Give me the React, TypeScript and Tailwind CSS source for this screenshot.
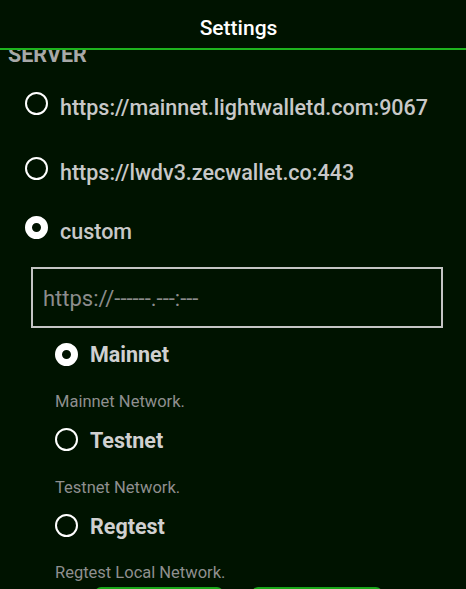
import { useState } from "react";

const Radio = ({ checked }: { checked: boolean }) =>
  checked ? (
    <span className="block w-[23px] h-[23px] shrink-0 rounded-full border-[7px] border-white bg-[#001300]" />
  ) : (
    <span className="block w-[23px] h-[23px] shrink-0 rounded-full border-2 border-white" />
  );

const App = () => {
  const [server, setServer] = useState("custom");
  const [net, setNet] = useState("main");

  const servers = [
    { id: "mainnet", label: "https://mainnet.lightwalletd.com:9067", mt: "mt-[24px]" },
    { id: "zec", label: "https://lwdv3.zecwallet.co:443", mt: "mt-[36px]" },
    { id: "custom", label: "custom", mt: "mt-[30px]" },
  ];

  const networks = [
    { id: "main", label: "Mainnet", desc: "Mainnet Network.", mt: "mt-[15px]", tmt: "mt-0", dmt: "mt-[25px]" },
    { id: "test", label: "Testnet", desc: "Testnet Network.", mt: "mt-[16px]", tmt: "mt-[1px]", dmt: "mt-[25px]" },
    { id: "reg", label: "Regtest", desc: "Regtest Local Network.", mt: "mt-[16px]", tmt: "mt-[1px]", dmt: "mt-[24px]" },
  ];

  return (
    <div className="w-[466px] h-[589px] bg-[#001300] overflow-hidden flex flex-col font-['Roboto',sans-serif]">
      <header className="h-[50px] shrink-0 flex justify-center pl-[11px] pt-[16px] border-b-2 border-[#1eb41e] text-white text-[21px] leading-[24px] font-medium">
        Settings
      </header>

      <div className="flex-1 overflow-hidden">
        <div className="-mt-[8px]">
          <div className="ml-[8px] h-[26px] leading-[26px] text-[21.5px] font-bold text-[#a8a8a8]">
            SERVER
          </div>

          {servers.map((s) => (
            <div
              key={s.id}
              onClick={() => setServer(s.id)}
              className={`${s.mt} ml-[25px] flex items-start gap-[12px] cursor-pointer`}
            >
              <Radio checked={server === s.id} />
              <span className="mt-[3px] text-[21.5px] leading-[26px] font-medium text-[#c8c8c8]">
                {s.label}
              </span>
            </div>
          ))}

          <input
            className="mt-[22px] ml-[31px] block w-[412px] h-[61px] border-2 border-[#c4c4c4] bg-transparent pl-[10px] pt-[2px] text-[22px] text-[#c8c8c8] placeholder:text-[#8c8c8c] outline-none"
            placeholder="https://------.---:---"
          />

          {networks.map((n) => (
            <div key={n.id}>
              <div
                onClick={() => setNet(n.id)}
                className={`${n.mt} ml-[55px] flex items-start gap-[12px] cursor-pointer`}
              >
                <Radio checked={net === n.id} />
                <span className={`${n.tmt} text-[21.5px] leading-[24px] font-bold text-[#d0d0d0]`}>
                  {n.label}
                </span>
              </div>
              <div className={`${n.dmt} ml-[55px] text-[16.5px] leading-[20px] text-[#8f8f8f]`}>
                {n.desc}
              </div>
            </div>
          ))}

          <div className="mt-[4px] ml-[95px] flex gap-[29px]">
            <button aria-label="Save" className="w-[128px] h-[40px] rounded-t-[6px] bg-[#1aa81a]" />
            <button aria-label="Cancel" className="w-[130px] h-[40px] rounded-t-[6px] bg-[#1aa81a]" />
          </div>
        </div>
      </div>
    </div>
  );
};

export default App;
